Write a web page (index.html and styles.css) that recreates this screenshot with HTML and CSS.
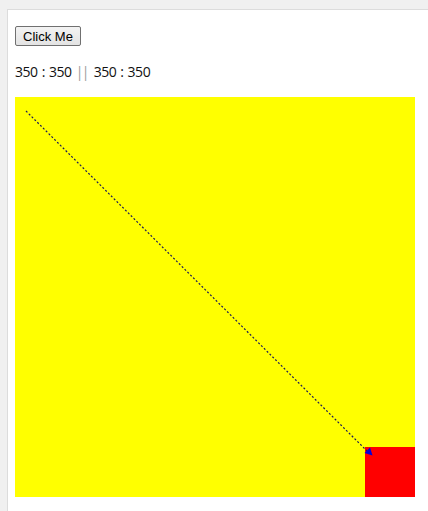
FILE: index.html
```html
<!DOCTYPE html>
<html>
<head>
<meta charset="utf-8">
<link rel="stylesheet" href="styles.css">
</head>
<body>
<div class="panel">
  <button class="btn">Click Me</button>
  <p class="coords">350 : 350 <span class="sep">||</span> 350 : 350</p>
  <div class="canvas">
    <svg class="wire" width="400" height="400" viewBox="0 0 400 400">
      <line x1="11" y1="14" x2="352" y2="354" stroke="#1a1a55" stroke-width="1.2" stroke-dasharray="2,2"/>
      <path d="M357.5,358.5 L349.5,356 L355,350.5 Z" fill="#0000dd"/>
    </svg>
    <div class="target"></div>
  </div>
</div>
</body>
</html>
```
FILE: styles.css
```css
html, body {
  margin: 0;
  padding: 0;
  background: #f0f0f0;
  height: 100%;
  overflow: hidden;
}
.panel {
  margin: 9px 0 0 7px;
  border-top: 1px solid #dcdcdc;
  border-left: 1px solid #dcdcdc;
  background: #fff;
  padding: 16px 7px 20px 7px;
  height: 600px;
  font-family: "Liberation Sans", Arial, sans-serif;
}
.btn {
  display: block;
  height: 20px;
  width: 66px;
  padding: 0;
  font-family: "Liberation Sans", Arial, sans-serif;
  font-size: 13px;
  color: #000;
  background: linear-gradient(#f3f3f3, #e3e3e3);
  border: 1px solid #707070;
  border-radius: 2px;
}
.coords {
  margin: 16px 0 0 0;
  font-family: "Open Sans", "Liberation Sans", sans-serif;
  font-size: 14px;
  line-height: 20px;
  color: #111;
  letter-spacing: -0.5px;
  word-spacing: 1px;
}
.sep {
  color: #999;
  letter-spacing: -1.5px;
  margin-right: 1.5px;
}
.canvas {
  position: relative;
  margin-top: 15px;
  width: 400px;
  height: 400px;
  background: #ffff00;
}
.wire {
  position: absolute;
  left: 0;
  top: 0;
  z-index: 2;
}
.target {
  position: absolute;
  left: 350px;
  top: 350px;
  width: 50px;
  height: 50px;
  background: #ff0000;
  z-index: 1;
}
```
